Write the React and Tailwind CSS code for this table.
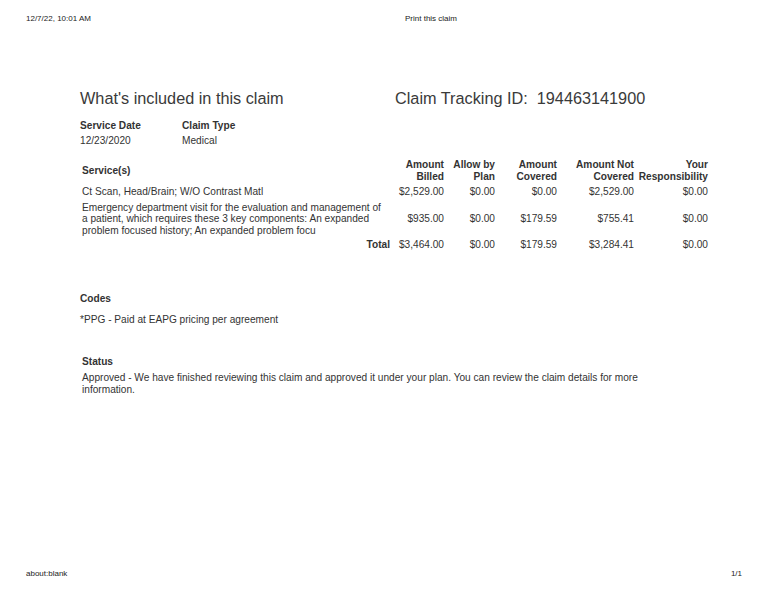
import React from 'react';

const ROWS = [
  { service: 'Ct Scan, Head/Brain; W/O Contrast Matl', billed: '$2,529.00', allow: '$0.00', covered: '$0.00', notCovered: '$2,529.00', resp: '$0.00' },
  {
    service: 'Emergency department visit for the evaluation and management of a patient, which requires these 3 key components: An expanded problem focused history; An expanded problem focu',
    billed: '$935.00', allow: '$0.00', covered: '$179.59', notCovered: '$755.41', resp: '$0.00',
  },
];

export default function App() {
  return (
    <div className="flex h-[594px] w-[768px] flex-col bg-white text-[#333] font-['Liberation_Sans',Arial,sans-serif]">
      <div className="flex items-center px-[26px] pt-[14px] text-[8px] leading-[10px] text-[#222]">
        <span className="w-[100px]">12/7/22, 10:01 AM</span>
        <span className="ml-[279px]">Print this claim</span>
      </div>

      <div className="pl-[80px] pt-[65px]">
        <div className="flex text-[16.25px] leading-[18px] text-[#3a3a3a]">
          <h1 className="w-[315px] font-normal">What's included in this claim</h1>
          <h2 className="font-normal">Claim Tracking ID:&nbsp; 194463141900</h2>
        </div>

        <div className="mt-[11px] flex text-[10.15px] leading-[15px]">
          <div className="w-[102px]">
            <div className="font-bold">Service Date</div>
            <div>12/23/2020</div>
          </div>
          <div>
            <div className="font-bold">Claim Type</div>
            <div>Medical</div>
          </div>
        </div>

        <table className="mt-[9px] w-[630px] table-fixed border-collapse text-[10.15px] leading-[11.5px]">
          <colgroup>
            <col className="w-[312px]" />
            <col className="w-[54px]" />
            <col className="w-[51px]" />
            <col className="w-[62px]" />
            <col className="w-[77px]" />
            <col className="w-[74px]" />
          </colgroup>
          <thead>
            <tr className="font-bold">
              <th className="px-[2px] py-[2px] text-left align-middle">Service(s)</th>
              <th className="px-[2px] py-[2px] text-right">Amount Billed</th>
              <th className="px-[2px] py-[2px] text-right">Allow by Plan</th>
              <th className="px-[2px] py-[2px] text-right">Amount Covered</th>
              <th className="px-[2px] py-[2px] text-right">Amount Not Covered</th>
              <th className="px-[2px] py-[2px] text-right">Your Responsibility</th>
            </tr>
          </thead>
          <tbody>
            {ROWS.map(r => (
              <tr key={r.service}>
                <td className="px-[2px] py-[2px] align-middle">
                  <div className="w-[304px]">{r.service}</div>
                </td>
                <td className="px-[2px] py-[2px] text-right">{r.billed}</td>
                <td className="px-[2px] py-[2px] text-right">{r.allow}</td>
                <td className="px-[2px] py-[2px] text-right">{r.covered}</td>
                <td className="px-[2px] py-[2px] text-right">{r.notCovered}</td>
                <td className="px-[2px] py-[2px] text-right">{r.resp}</td>
              </tr>
            ))}
            <tr>
              <td className="px-[2px] pt-[1px] pb-[2px] text-right font-bold">Total</td>
              <td className="px-[2px] pt-[1px] pb-[2px] text-right">$3,464.00</td>
              <td className="px-[2px] pt-[1px] pb-[2px] text-right">$0.00</td>
              <td className="px-[2px] pt-[1px] pb-[2px] text-right">$179.59</td>
              <td className="px-[2px] pt-[1px] pb-[2px] text-right">$3,284.41</td>
              <td className="px-[2px] pt-[1px] pb-[2px] text-right">$0.00</td>
            </tr>
          </tbody>
        </table>

        <div className="mt-[40px] text-[10.15px] leading-[12px]">
          <div className="font-bold">Codes</div>
          <div className="mt-[9px]">*PPG - Paid at EAPG pricing per agreement</div>
        </div>

        <div className="mt-[30px] pl-[2px] text-[10.15px] leading-[11.5px]">
          <div className="font-bold">Status</div>
          <p className="mt-[5px] w-[590px]">
            Approved - We have finished reviewing this claim and approved it under your plan. You can review the claim details for more information.
          </p>
        </div>
      </div>

      <div className="flex-1" />

      <div className="flex items-center justify-between px-[26px] pb-[15px] text-[8px] leading-[10px] text-[#222]">
        <span>about:blank</span>
        <span>1/1</span>
      </div>
    </div>
  );
}
